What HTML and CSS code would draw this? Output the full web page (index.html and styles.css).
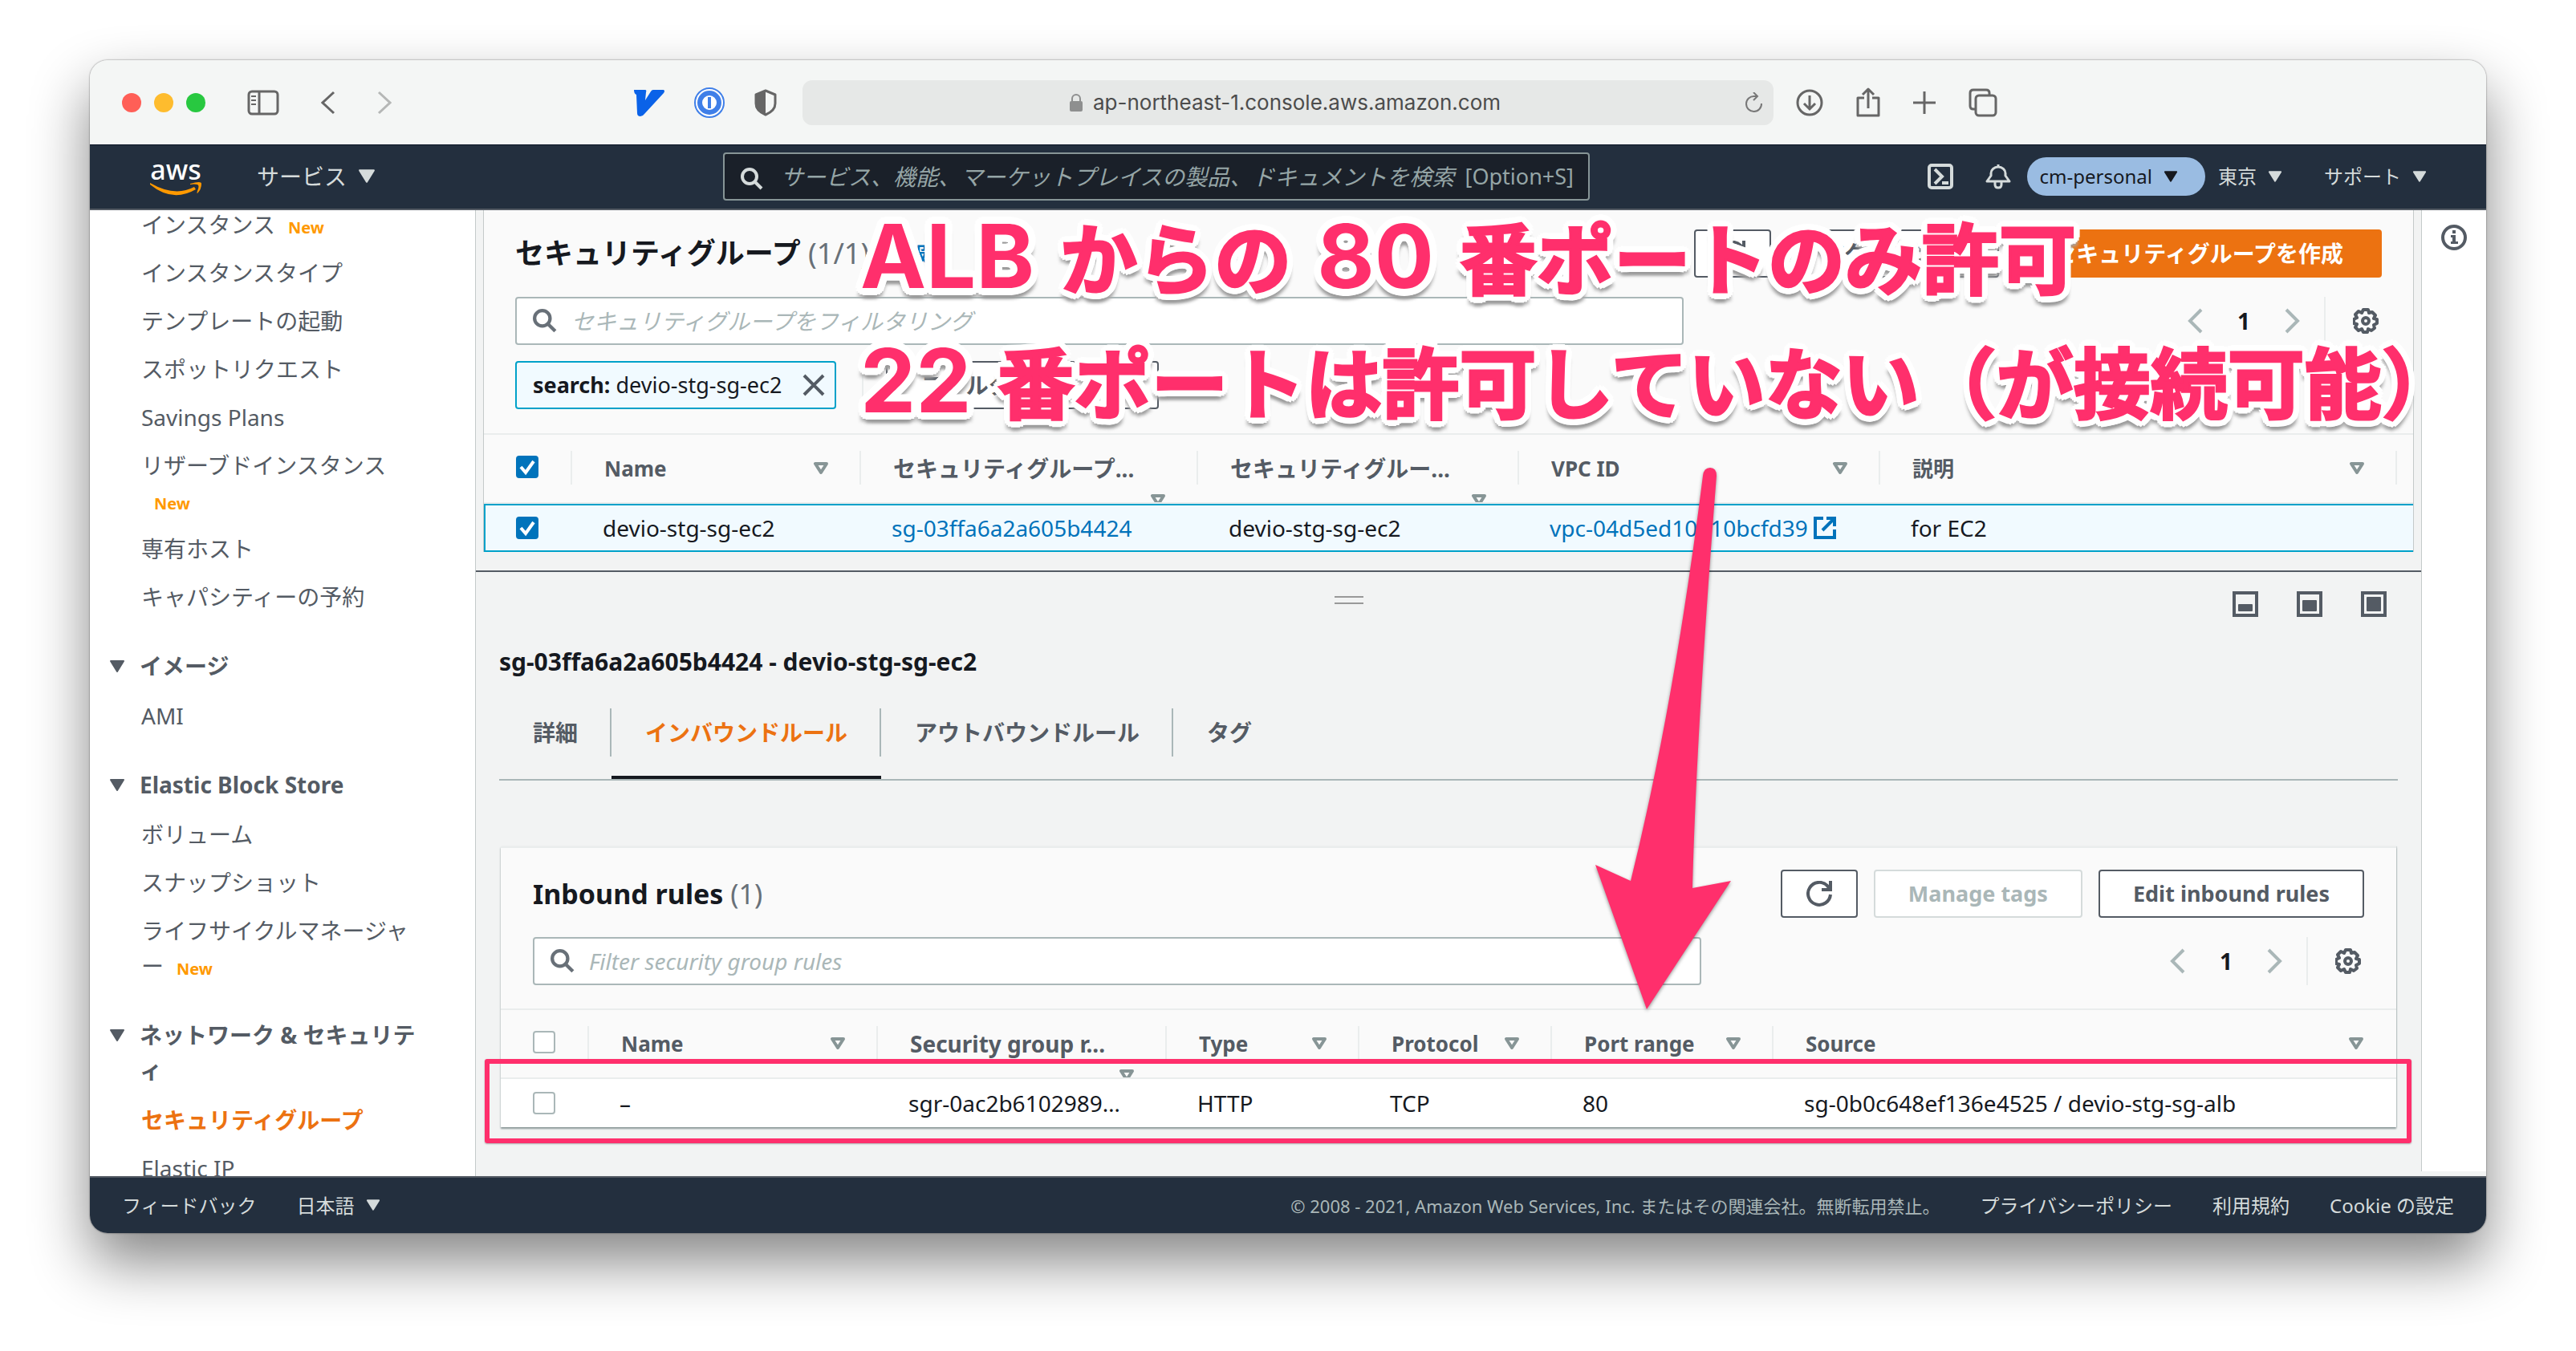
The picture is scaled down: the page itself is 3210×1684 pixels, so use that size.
FILE: index.html
```
<!DOCTYPE html>
<html lang="ja">
<head>
    <meta charset="utf-8">
    <title>セキュリティグループ | EC2</title>
    <link rel="stylesheet" href="styles.css">
</head>
<body>

    <svg class="symbols" width="0" height="0">
        <symbol id="search" viewBox="0 0 28 28"><g fill="none" stroke="currentColor" stroke-width="4"><circle cx="11" cy="11" r="9"/><path d="M17 17l9 9"/></g></symbol>
        <symbol id="sort" viewBox="0 0 20 16"><path d="M3 2h14l-7 11z" fill="none" stroke="currentColor" stroke-width="4" stroke-linejoin="round"/></symbol>
        <symbol id="caret" viewBox="0 0 20 16"><path d="M2 1h16l-8 13z" fill="currentColor" stroke="currentColor" stroke-width="2" stroke-linejoin="round"/></symbol>
        <symbol id="prev" viewBox="0 0 20 32"><path d="M17 2L3 16l14 14" fill="none" stroke="currentColor" stroke-width="4"/></symbol>
        <symbol id="next" viewBox="0 0 20 32"><path d="M3 2l14 14L3 30" fill="none" stroke="currentColor" stroke-width="4"/></symbol>
        <symbol id="gear" viewBox="0 0 32 32"><g fill="none" stroke="currentColor" stroke-width="4" stroke-linejoin="round"><path d="M13 2h6l1 4 4-1 4 4-2 4 4 1v5l-4 2 1 4-4 3-4-2-1 4h-5l-2-4-4 2-4-4 2-4-4-1v-5l4-2-2-4 4-4 4 2z"/><circle cx="16" cy="16" r="4"/></g></symbol>
        <symbol id="refresh" viewBox="0 0 32 32"><g fill="none" stroke="currentColor" stroke-width="4"><path d="M30 17a14 14 0 1 1-4-11l3 4"/><path d="M30 0v11H19"/></g></symbol>
    </svg>

    <div class="window">
        <header class="titlebar">
            <div class="titlebar-left">
                <span class="light red"></span>
                <span class="light yellow"></span>
                <span class="light green"></span>
                <button class="tool sidebar-toggle" aria-label="サイドバー">
                    <svg width="40" height="32" viewBox="0 0 40 32" fill="none" stroke="#666" stroke-width="3"><rect x="2" y="2" width="36" height="28" rx="4"/><path d="M15 2v28"/><path d="M5 8h6M5 13h6M5 18h6" stroke-width="2"/></svg>
                </button>
                <button class="tool back" aria-label="戻る">
                    <svg width="18" height="30" viewBox="0 0 18 30" fill="none" stroke="#666" stroke-width="3"><path d="M16 2L2 15l14 13"/></svg>
                </button>
                <button class="tool forward" aria-label="進む">
                    <svg width="18" height="30" viewBox="0 0 18 30" fill="none" stroke="#b5b7b6" stroke-width="3"><path d="M2 2l14 13L2 28"/></svg>
                </button>
                <div class="extensions">
                    <svg width="40" height="38" viewBox="0 0 40 38"><path d="M1 3h14q2 0 1 3l-1 10 7-11q1-2 3-2h13q2 1 0 4L14 33q-2 3-5 3-4 0-4-4L4 9Q1 8 1 3z" fill="#0a62e8"/></svg>
                    <svg width="40" height="40" viewBox="0 0 40 40"><circle cx="20" cy="20" r="18" fill="#fff" stroke="#3f7fe8" stroke-width="2"/><circle cx="20" cy="20" r="12" fill="none" stroke="#3f7fe8" stroke-width="6"/><path d="M20 13v14" stroke="#3f7fe8" stroke-width="4"/></svg>
                    <svg width="30" height="34" viewBox="0 0 30 34"><path d="M15 2l12 5v11q0 9-12 14Q3 27 3 18V7z" fill="none" stroke="#666" stroke-width="3" stroke-linejoin="round"/><path d="M15 1L2 7v11q0 10 13 15z" fill="#666"/></svg>
                </div>
            </div>
            <div class="url-bar">
                <svg class="lock" width="18" height="24" viewBox="0 0 18 24"><path d="M4 12V7a5 5 0 0 1 10 0v5" fill="none" stroke="#8e8f8f" stroke-width="2"/><rect x="1" y="10" width="16" height="13" rx="2" fill="#8e8f8f"/></svg>
                <span>ap-northeast-1.console.aws.amazon.com</span>
                <svg class="reload" width="24" height="26" viewBox="0 0 24 26" fill="none" stroke="#777" stroke-width="2"><path d="M21 14a9.500 9.500 0 1 1-9-9h4"/><path d="M11 0l5 5-5 5"/></svg>
            </div>
            <div class="titlebar-right">
                <svg width="34" height="34" viewBox="0 0 34 34" fill="none" stroke="#666" stroke-width="3"><circle cx="17" cy="17" r="15"/><path d="M17 8v17M10 18l7 7 7-7"/></svg>
                <svg width="30" height="38" viewBox="0 0 30 38" fill="none" stroke="#666" stroke-width="3"><path d="M10 13H2v22h26V13h-8M15 26V3M8 9l7-7 7 7" stroke-linejoin="round"/></svg>
                <svg width="28" height="28" viewBox="0 0 28 28" stroke="#666" stroke-width="3"><path d="M14 0v28M0 14h28"/></svg>
                <svg width="36" height="36" viewBox="0 0 36 36" fill="none" stroke="#666" stroke-width="3"><path d="M8 26H6q-4 0-4-4V6q0-4 4-4h16q4 0 4 4v2"/><rect x="9" y="9" width="25" height="25" rx="4"/></svg>
            </div>
        </header>

        <nav class="nav">
            <a class="logo" href="#">
                <span>aws</span>
                <svg width="66" height="18" viewBox="0 0 66 18"><path d="M1 1q31 18 55 5l2 3Q29 26 1 3z" fill="#ff9900"/><path d="M51 2q14-4 14 0 0 7-5 12-1 0 0-3 3-7 0-8-4-1-9 0z" fill="#ff9900"/></svg>
            </a>
            <button class="nav-link">サービス <svg width="22" height="18"><use href="#caret"/></svg></button>
            <label class="nav-search">
                <svg width="28" height="28"><use href="#search"/></svg>
                <input type="text" placeholder="サービス、機能、マーケットプレイスの製品、ドキュメントを検索">
                <span>[Option+S]</span>
            </label>
            <div class="nav-right">
                <button class="nav-icon" aria-label="CloudShell">
                    <svg width="32" height="32" viewBox="0 0 32 32" fill="none" stroke="currentColor" stroke-width="4"><rect x="2" y="2" width="28" height="28" rx="3"/><path d="M9 7l9 9-9 9M18 24h8"/></svg>
                </button>
                <button class="nav-icon" aria-label="通知">
                    <svg width="32" height="32" viewBox="0 0 32 32" fill="none" stroke="currentColor" stroke-width="3" stroke-linejoin="round"><path d="M16 1v4M2 22h28l-5-7v-3a9 8 0 0 0-18 0v3zM12 23v3q0 4 4 4t4-4v-3"/></svg>
                </button>
                <button class="account">cm-personal <svg width="18" height="15"><use href="#caret"/></svg></button>
                <button class="nav-small">東京 <svg width="18" height="15"><use href="#caret"/></svg></button>
                <button class="nav-small support">サポート <svg width="18" height="15"><use href="#caret"/></svg></button>
            </div>
        </nav>

        <div class="content">
            <aside class="sidebar">
                <ul>
                    <li><a href="#">インスタンス</a><span class="new">New</span></li>
                    <li><a href="#">インスタンスタイプ</a></li>
                    <li><a href="#">テンプレートの起動</a></li>
                    <li><a href="#">スポットリクエスト</a></li>
                    <li><a href="#">Savings Plans</a></li>
                    <li><a href="#">リザーブドインスタンス</a> <span class="new">New</span></li>
                    <li><a href="#">専有ホスト</a></li>
                    <li><a href="#">キャパシティーの予約</a></li>
                </ul>
                <h3><svg width="20" height="16"><use href="#caret"/></svg><span>イメージ</span></h3>
                <ul>
                    <li><a href="#">AMI</a></li>
                </ul>
                <h3><svg width="20" height="16"><use href="#caret"/></svg><span>Elastic Block Store</span></h3>
                <ul>
                    <li><a href="#">ボリューム</a></li>
                    <li><a href="#">スナップショット</a></li>
                    <li><a href="#">ライフサイクルマネージャー</a><span class="new">New</span></li>
                </ul>
                <h3><svg width="20" height="16"><use href="#caret"/></svg><span>ネットワーク &amp; セキュリティ</span></h3>
                <ul>
                    <li><a class="current" href="#">セキュリティグループ</a></li>
                    <li><a href="#">Elastic IP</a></li>
                </ul>
            </aside>

            <main class="main">
                <section class="groups">
                    <div class="panel-head">
                        <div class="row">
                            <h1>セキュリティグループ <span class="count">(1/1)</span></h1>
                            <a class="info-link" href="#">情報</a>
                            <div class="actions">
                                <button class="btn icon-btn" aria-label="更新"><svg width="32" height="32"><use href="#refresh"/></svg></button>
                                <button class="btn">アクション <svg width="20" height="16"><use href="#caret"/></svg></button>
                                <button class="btn primary">セキュリティグループを作成</button>
                            </div>
                        </div>
                        <div class="row">
                            <label class="filter">
                                <svg width="30" height="30"><use href="#search"/></svg>
                                <input type="text" placeholder="セキュリティグループをフィルタリング">
                            </label>
                            <div class="pager">
                                <button aria-label="前へ"><svg width="20" height="32"><use href="#prev"/></svg></button>
                                <b>1</b>
                                <button aria-label="次へ"><svg width="20" height="32"><use href="#next"/></svg></button>
                                <button class="settings" aria-label="設定"><svg width="32" height="32"><use href="#gear"/></svg></button>
                            </div>
                        </div>
                        <div class="row chips">
                            <span class="chip"><span><b>search:</b> devio-stg-sg-ec2</span>
                                <button aria-label="削除"><svg width="28" height="28" viewBox="0 0 28 28" stroke="#545b64" stroke-width="4"><path d="M2 2l24 24M26 2L2 26"/></svg></button>
                            </span>
                            <span class="chip-line"></span>
                            <button class="btn">フィルターをクリア</button>
                        </div>
                    </div>
                    <table class="groups-table">
                        <colgroup>
                            <col class="w-check"><col class="w-360"><col class="w-420"><col class="w-400"><col class="w-450"><col>
                        </colgroup>
                        <thead>
                            <tr>
                                <th><div class="head check"><input type="checkbox" aria-label="すべて選択" checked></div></th>
                                <th><div class="head"><span>Name</span><svg width="20" height="16"><use href="#sort"/></svg></div></th>
                                <th><div class="head wrap"><span>セキュリティグループ...</span><svg width="20" height="16"><use href="#sort"/></svg></div></th>
                                <th><div class="head wrap"><span>セキュリティグルー...</span><svg width="20" height="16"><use href="#sort"/></svg></div></th>
                                <th><div class="head"><span>VPC ID</span><svg width="20" height="16"><use href="#sort"/></svg></div></th>
                                <th class="last"><div class="head"><span>説明</span><svg width="20" height="16"><use href="#sort"/></svg></div></th>
                            </tr>
                        </thead>
                        <tbody>
                            <tr class="selected">
                                <td><input type="checkbox" aria-label="devio-stg-sg-ec2 を選択" checked></td>
                                <td>devio-stg-sg-ec2</td>
                                <td><a href="#">sg-03ffa6a2a605b4424</a></td>
                                <td>devio-stg-sg-ec2</td>
                                <td><a href="#">vpc-04d5ed10810bcfd39 <svg class="external" width="28" height="28" viewBox="0 0 28 28" fill="none" stroke="currentColor" stroke-width="4"><path d="M12 2H2v24h24V16M16 2h10v10M26 2L11 17"/></svg></a></td>
                                <td>for EC2</td>
                            </tr>
                        </tbody>
                    </table>
                </section>

                <section class="detail">
                    <div class="detail-bar">
                        <span class="handle"></span>
                        <div class="layouts">
                            <button aria-label="小"><svg width="32" height="32" viewBox="0 0 32 32"><rect x="2" y="2" width="28" height="28" fill="none" stroke="#545b64" stroke-width="4"/><rect x="7" y="16" width="18" height="9" rx="1" fill="#545b64"/></svg></button>
                            <button aria-label="中"><svg width="32" height="32" viewBox="0 0 32 32"><rect x="2" y="2" width="28" height="28" fill="none" stroke="#545b64" stroke-width="4"/><rect x="7" y="11" width="18" height="14" rx="1" fill="#545b64"/></svg></button>
                            <button aria-label="大"><svg width="32" height="32" viewBox="0 0 32 32"><rect x="2" y="2" width="28" height="28" fill="none" stroke="#545b64" stroke-width="4"/><rect x="7" y="7" width="18" height="18" rx="1" fill="#545b64"/></svg></button>
                        </div>
                    </div>
                    <h2>sg-03ffa6a2a605b4424 - devio-stg-sg-ec2</h2>
                    <div class="tabs">
                        <button>詳細</button>
                        <button class="active">インバウンドルール</button>
                        <button>アウトバウンドルール</button>
                        <button>タグ</button>
                    </div>

                    <div class="card">
                        <div class="panel-head">
                            <div class="row">
                                <h1>Inbound rules <span class="count">(1)</span></h1>
                                <div class="actions">
                                    <button class="btn icon-btn" aria-label="更新"><svg width="32" height="32"><use href="#refresh"/></svg></button>
                                    <button class="btn" disabled>Manage tags</button>
                                    <button class="btn">Edit inbound rules</button>
                                </div>
                            </div>
                            <div class="row">
                                <label class="filter">
                                    <svg width="30" height="30"><use href="#search"/></svg>
                                    <input type="text" placeholder="Filter security group rules">
                                </label>
                                <div class="pager">
                                    <button aria-label="前へ"><svg width="20" height="32"><use href="#prev"/></svg></button>
                                    <b>1</b>
                                    <button aria-label="次へ"><svg width="20" height="32"><use href="#next"/></svg></button>
                                    <button class="settings" aria-label="設定"><svg width="32" height="32"><use href="#gear"/></svg></button>
                                </div>
                            </div>
                        </div>
                        <table class="rules-table">
                            <colgroup>
                                <col class="w-check"><col class="w-360"><col class="w-360"><col class="w-240"><col class="w-240"><col class="w-276"><col>
                            </colgroup>
                            <thead>
                                <tr>
                                    <th><div class="head check"><input type="checkbox" aria-label="すべて選択"></div></th>
                                    <th><div class="head"><span>Name</span><svg width="20" height="16"><use href="#sort"/></svg></div></th>
                                    <th><div class="head wrap"><span>Security group r...</span><svg width="20" height="16"><use href="#sort"/></svg></div></th>
                                    <th><div class="head"><span>Type</span><svg width="20" height="16"><use href="#sort"/></svg></div></th>
                                    <th><div class="head"><span>Protocol</span><svg width="20" height="16"><use href="#sort"/></svg></div></th>
                                    <th><div class="head"><span>Port range</span><svg width="20" height="16"><use href="#sort"/></svg></div></th>
                                    <th class="last"><div class="head"><span>Source</span><svg width="20" height="16"><use href="#sort"/></svg></div></th>
                                </tr>
                            </thead>
                            <tbody>
                                <tr>
                                    <td><input type="checkbox" aria-label="ルールを選択"></td>
                                    <td>–</td>
                                    <td>sgr-0ac2b6102989…</td>
                                    <td>HTTP</td>
                                    <td>TCP</td>
                                    <td>80</td>
                                    <td>sg-0b0c648ef136e4525 / devio-stg-sg-alb</td>
                                </tr>
                            </tbody>
                        </table>
                    </div>
                </section>
            </main>

            <aside class="info">
                <button aria-label="情報">
                    <svg width="34" height="34" viewBox="0 0 34 34"><circle cx="17" cy="17" r="14" fill="none" stroke="#545b64" stroke-width="4"/><path d="M15 8h4v4h-4zM13 14h6v8h3v3h-9v-3h2v-5h-2z" fill="#545b64"/></svg>
                </button>
            </aside>
        </div>

        <footer class="footer">
            <a href="#">フィードバック</a>
            <button>日本語 <svg width="18" height="15"><use href="#caret"/></svg></button>
            <span class="copyright">© 2008 - 2021, Amazon Web Services, Inc. またはその関連会社。無断転用禁止。</span>
            <a href="#">プライバシーポリシー</a>
            <a href="#">利用規約</a>
            <a href="#">Cookie の設定</a>
        </footer>

        <p class="note"><span>ALB </span>からの<span> 80 </span>番ポートのみ許可<br><span>22 </span>番ポートは許可していない（が接続可能）</p>
        <svg class="arrow" width="180" height="684" viewBox="0 0 180 684"><path d="M136 13Q137 3 145 3t8 10Q128 330 123 527l48-9L66 678 2 498l44 20Q100 300 136 13z" fill="#ff2f6c"/></svg>
        <div class="marker"></div>
    </div>

</body>
</html>
```
FILE: styles.css
```
* {
    box-sizing: border-box;
}

body {
    margin: 0;
    padding: 75px 112px 147px;
    min-height: 100vh;
    display: flex;
    background: #fff;
    color: #16191f;
    font-family: "Noto Sans", "Noto Sans CJK JP", sans-serif;
    font-size: 28px;
    line-height: 44px;
}

button, input {
    font: inherit;
    color: inherit;
    margin: 0;
    padding: 0;
    border: 0;
    background: none;
}

svg {
    display: block;
    flex: none;
}

a {
    color: #0073bb;
    text-decoration: none;
}

h1, h2, h3, ul, p {
    margin: 0;
    padding: 0;
}

.symbols {
    position: absolute;
}

.window {
    position: relative;
    flex: 1;
    min-width: 0;
    display: flex;
    flex-direction: column;
    border-radius: 22px;
    background: #f2f3f3;
    box-shadow: 0 0 2px rgba(0, 0, 0, .6), 0 36px 72px rgba(0, 0, 0, .48);
}

/* browser chrome */
.titlebar {
    display: grid;
    grid-template-columns: 888fr 1210fr 888fr;
    align-items: center;
    height: 105px;
    background: #f4f6f5;
    border-radius: 22px 22px 0 0;
}

.titlebar-left {
    display: flex;
    align-items: center;
    padding-left: 40px;
}

.light {
    width: 24px;
    height: 24px;
    margin-right: 16px;
    border-radius: 50%;
}

.red { background: #ff5f57; }
.yellow { background: #febc2e; }
.green { background: #28c840; }

.sidebar-toggle { margin-left: 36px; }
.back { margin-left: 52px; }
.forward { margin-left: 52px; }

.extensions {
    display: flex;
    align-items: center;
    gap: 35px;
    margin-left: auto;
    padding-right: 31px;
}

.url-bar {
    display: flex;
    align-items: center;
    justify-content: center;
    gap: 12px;
    height: 56px;
    padding: 0 12px 0 40px;
    border-radius: 12px;
    background: #e6e8e7;
    color: #4c4c4c;
    font-family: Inter, sans-serif;
    font-size: 26px;
}

.lock { margin-left: auto; }
.reload { margin-left: auto; }

.titlebar-right {
    display: flex;
    align-items: center;
    gap: 41px;
    padding-left: 28px;
}

/* console navigation */
.nav {
    display: flex;
    align-items: center;
    height: 82px;
    padding: 0 74px;
    background: #232f3e;
    border-bottom: 2px solid #545b64;
    box-shadow: inset 0 1px #0a1424;
    color: #d5dbdb;
}

.nav button {
    display: flex;
    align-items: center;
}

.logo {
    display: flex;
    flex-direction: column;
    align-items: center;
    color: #fff;
    font-size: 34px;
    font-weight: 500;
    line-height: 32px;
}

.nav-link {
    gap: 14px;
    margin-left: 68px;
}

.nav-search {
    display: flex;
    align-items: center;
    width: 1080px;
    height: 60px;
    margin-left: 433px;
    padding: 0 18px 0 20px;
    border: 2px solid #879596;
    border-radius: 4px;
    background: #1a2029;
}

.nav-search svg {
    margin-top: 6px;
    color: #d5dbdb;
}

.nav-search input {
    flex: 1;
    min-width: 0;
    padding-left: 22px;
    outline: none;
}

.nav-search input::placeholder {
    color: #95a5a6;
    font-style: italic;
    opacity: 1;
}

.nav-search span {
    color: #95a5a6;
    font-size: 27px;
}

.nav-right {
    display: flex;
    align-items: center;
    margin-left: auto;
    font-size: 24px;
}

.nav-icon {
    margin-right: 40px;
}

.account {
    gap: 14px;
    height: 48px;
    margin-left: -20px;
    padding: 0 34px 0 16px;
    border-radius: 24px;
    background: #9abce2;
}

.nav .account {
    color: #16191f;
}

.nav-small {
    gap: 14px;
    margin-left: 16px;
}

.support {
    margin-left: 52px;
}

/* page */
.content {
    flex: 1;
    min-height: 0;
    display: flex;
}

.sidebar {
    flex: none;
    width: 481px;
    height: 1204px;
    padding: 0 60px 0 24px;
    overflow: hidden;
    background: #fff;
    border-right: 1px solid #c4caca;
    color: #545b64;
    line-break: anywhere;
}

.sidebar ul {
    margin-left: 40px;
    list-style: none;
}

.sidebar ul:first-child {
    margin-top: -4px;
}

.sidebar li {
    margin-bottom: 16px;
}

.sidebar li a {
    color: #545b64;
}

.sidebar li .current {
    color: #ec7211;
    font-weight: 700;
}

.new {
    display: inline-block;
    margin-left: 16px;
    color: #ff9900;
    font-size: 20px;
    font-weight: 700;
    line-height: 20px;
    white-space: nowrap;
}

.sidebar h3 {
    display: flex;
    gap: 18px;
    margin: 42px 0 18px;
    font-size: 28px;
}

.sidebar h3 svg {
    margin-top: 15px;
}

.main {
    flex: 1;
    min-width: 0;
}

.groups {
    margin: 0 9px;
    background: #fafafa;
    border-left: 1px solid #c4caca;
    border-right: 1px solid #c4caca;
}

.panel-head {
    display: flex;
    flex-direction: column;
    gap: 24px;
    padding: 24px 39px 30px;
    border-bottom: 2px solid #eaeded;
}

.row {
    display: flex;
    align-items: center;
    height: 60px;
}

h1 {
    font-size: 36px;
    font-weight: 700;
}

.count {
    color: #687078;
    font-weight: 400;
}

.info-link {
    margin-left: 24px;
    font-size: 24px;
    font-weight: 700;
}

.actions {
    display: flex;
    gap: 20px;
    margin-left: auto;
}

.btn {
    display: flex;
    align-items: center;
    gap: 18px;
    height: 60px;
    padding: 0 41px;
    border: 2px solid #545b64;
    border-radius: 4px;
    background: #fff;
    color: #545b64;
    font-size: 27px;
    font-weight: 700;
}

.groups .btn {
    padding: 0 42px;
    font-size: 28px;
}

.icon-btn,
.groups .icon-btn {
    justify-content: center;
    width: 96px;
    padding: 0;
}

.btn:disabled {
    border-color: #d5dbdb;
    color: #aab7b8;
}

.groups .primary {
    padding: 0 46px;
    border-color: #ec7211;
    background: #ec7211;
    color: #fff;
}

.filter {
    display: flex;
    align-items: center;
    width: 1456px;
    height: 60px;
    padding: 0 20px;
    border: 2px solid #aab7b8;
    border-radius: 4px;
    background: #fff;
    color: #687078;
}

.filter input {
    flex: 1;
    padding-left: 18px;
    outline: none;
}

.filter input::placeholder {
    color: #aab7b8;
    font-style: italic;
    opacity: 1;
}

.pager {
    display: flex;
    align-items: center;
    height: 60px;
    margin-left: auto;
    margin-right: 4px;
    color: #aab7b8;
}

.pager b {
    width: 100px;
    color: #16191f;
    text-align: center;
}

.pager .settings {
    height: 60px;
    margin-left: 30px;
    padding-left: 34px;
    border-left: 2px solid #eaeded;
    color: #545b64;
}

.chips {
    margin-top: -4px;
}

.chip {
    display: flex;
    align-items: center;
    gap: 26px;
    height: 60px;
    padding: 0 12px 0 20px;
    border: 2px solid #00a1c9;
    border-radius: 4px;
    background: #f1faff;
    font-size: 27px;
}

.chip-line {
    width: 2px;
    height: 60px;
    margin: 0 28px 0 32px;
    background: #eaeded;
}

/* tables */
table {
    width: 100%;
    table-layout: fixed;
    border-collapse: separate;
    border-spacing: 0;
}

.w-check { width: 110px; }
.w-240 { width: 240px; }
.w-276 { width: 276px; }
.w-360 { width: 360px; }
.w-400 { width: 400px; }
.w-420 { width: 420px; }
.w-450 { width: 450px; }

th {
    padding: 22px 40px 0;
    border-bottom: 2px solid #eaeded;
    background: linear-gradient(#eaeded, #eaeded) right 20px / 2px 42px no-repeat;
    color: #545b64;
    font-size: 26px;
    text-align: left;
}

.groups-table .last {
    padding-right: 60px;
    background-position: right 20px top 20px;
}

.rules-table .last {
    background: none;
}

.head {
    display: flex;
    flex-wrap: wrap;
    align-content: flex-start;
    height: 62px;
    line-height: 40px;
    overflow: hidden;
    white-space: nowrap;
}

.head svg {
    margin: 12px 0 12px auto;
    color: #879596;
}

.head.wrap span {
    flex: 0 0 100%;
    font-size: 28px;
}

.head.check {
    padding-top: 4px;
}

td {
    height: 60px;
    padding: 0 38px;
    background: #fff;
    white-space: nowrap;
}

td:first-child {
    padding-left: 40px;
}

.selected td {
    border-top: 2px solid #00a1c9;
    border-bottom: 2px solid #00a1c9;
    background: #f1faff;
}

.selected td:first-child {
    border-left: 2px solid #00a1c9;
    padding-left: 38px;
}

input[type="checkbox"] {
    appearance: none;
    display: block;
    width: 28px;
    height: 28px;
    border: 2px solid #aab7b8;
    border-radius: 4px;
    background: #fff;
}

input[type="checkbox"]:checked {
    border-color: #0073bb;
    background: #0073bb url("data:image/svg+xml,%3Csvg xmlns='http://www.w3.org/2000/svg' viewBox='0 0 24 24'%3E%3Cpath d='M4 12l6 7L20 5' fill='none' stroke='white' stroke-width='4'/%3E%3C/svg%3E");
}

.external {
    display: inline-block;
    vertical-align: -3px;
}

/* split panel */
.detail {
    margin-top: 23px;
    padding: 24px 29px 0;
    border-top: 2px solid #545b64;
}

.detail-bar {
    display: flex;
    align-items: flex-start;
    height: 32px;
}

.handle {
    width: 36px;
    height: 10px;
    margin: 6px 0 0 44%;
    border-top: 2px solid #999;
    border-bottom: 2px solid #999;
}

.layouts {
    display: flex;
    gap: 48px;
    margin: 0 14px 0 auto;
}

h2 {
    margin-top: 34px;
    font-size: 30px;
}

.tabs {
    display: flex;
    margin-top: 36px;
    border-bottom: 2px solid #aab7b8;
}

.tabs button {
    height: 88px;
    padding: 0 42px 24px;
    border-bottom: 4px solid transparent;
    background: linear-gradient(#aab7b8, #aab7b8) right top / 2px 60px no-repeat;
    color: #545b64;
    font-weight: 700;
    line-height: 60px;
}

.tabs .active {
    color: #ec7211;
    border-bottom-color: #16191f;
}

.tabs button:last-child {
    background: none;
}

.card {
    margin: 82px 2px 0;
    border-top: 2px solid #eaeded;
    background: #fafafa;
    box-shadow: 0 2px 2px #879596, 1px 0 1px #d5dbdb;
}

.card .panel-head {
    padding: 27px 40px 29px;
}

.card h1 {
    font-size: 34px;
}

.info {
    flex: none;
    width: 81px;
    height: 1198px;
    background: #fff;
    border-left: 1px solid #c4caca;
}

.info button {
    margin: 17px auto 0;
    display: block;
}

.footer {
    display: flex;
    align-items: center;
    height: 71px;
    padding: 0 40px;
    border-top: 2px solid #545b64;
    border-radius: 0 0 22px 22px;
    background: #232f3e;
    color: #d5dbdb;
    font-size: 24px;
}

.footer a {
    color: #d5dbdb;
}

.footer button {
    display: flex;
    align-items: center;
    gap: 14px;
    margin-left: 50px;
}

.footer span + a,
.footer a + a {
    margin-left: 50px;
}

.copyright {
    margin-left: auto;
    color: #aab7b8;
    font-size: 22px;
}

/* annotations */
.note {
    position: absolute;
    top: 166px;
    left: 954px;
    color: #ff2f6c;
    font-family: "Noto Sans CJK JP", sans-serif;
    font-size: 96px;
    font-weight: 700;
    line-height: 154px;
    white-space: nowrap;
    -webkit-text-stroke: 3px #ff2f6c;
    text-shadow:
        9px 0 #fff, -9px 0 #fff, 0 9px #fff, 0 -9px #fff,
        8px 4px #fff, 8px -4px #fff, -8px 4px #fff, -8px -4px #fff,
        4px 8px #fff, 4px -8px #fff, -4px 8px #fff, -4px -8px #fff,
        6px 6px #fff, 6px -6px #fff, -6px 6px #fff, -6px -6px #fff,
        5px 0 #fff, -5px 0 #fff, 0 5px #fff, 0 -5px #fff,
        0 13px 4px #999, 6px 11px 4px #aaa, -6px 11px 4px #aaa;
}

.note span {
    padding: 0 6px;
    font-family: Inter, sans-serif;
    font-size: 110px;
    -webkit-text-stroke: 0;
}

.arrow {
    position: absolute;
    top: 505px;
    left: 1874px;
    filter: drop-shadow(0 2px 2px rgba(0, 0, 0, .4));
}

.marker {
    position: absolute;
    top: 1245px;
    left: 492px;
    right: 93px;
    height: 105px;
    border: 6px solid #ff2f6c;
    border-radius: 3px;
    box-shadow: 0 1px 2px rgba(0, 0, 0, .3);
}
```
